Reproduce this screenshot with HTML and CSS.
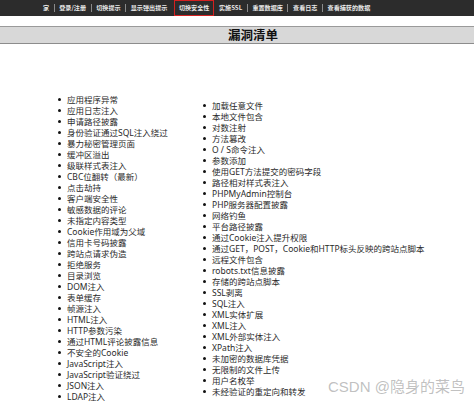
FILE: index.html
```html
<!DOCTYPE html>
<html lang="zh-CN">
<head>
<meta charset="utf-8">
<title>漏洞清单</title>
<link rel="stylesheet" href="styles.css">
</head>
<body>
<nav class="nav">
  <span class="nav-item">家</span><span class="sep"></span>
  <span class="nav-item">登录/注册</span><span class="sep"></span>
  <span class="nav-item">切换提示</span><span class="sep"></span>
  <span class="nav-item">显示弹出提示</span>
  <span class="nav-item active">切换安全性</span>
  <span class="nav-item">实施SSL</span><span class="sep"></span>
  <span class="nav-item">重置数据库</span><span class="sep"></span>
  <span class="nav-item">查看日志</span><span class="sep"></span>
  <span class="nav-item">查看捕获的数据</span>
</nav>
<h1 class="title">漏洞清单</h1>
<div class="lists">
  <ul class="col col-left">
    <li>应用程序异常</li>
    <li>应用日志注入</li>
    <li>申请路径披露</li>
    <li>身份验证通过SQL注入绕过</li>
    <li>暴力秘密管理页面</li>
    <li>缓冲区溢出</li>
    <li>级联样式表注入</li>
    <li>CBC位翻转（最新）</li>
    <li>点击劫持</li>
    <li>客户端安全性</li>
    <li>敏感数据的评论</li>
    <li>未指定内容类型</li>
    <li>Cookie作用域为父域</li>
    <li>信用卡号码披露</li>
    <li>跨站点请求伪造</li>
    <li>拒绝服务</li>
    <li>目录浏览</li>
    <li>DOM注入</li>
    <li>表单缓存</li>
    <li>帧源注入</li>
    <li>HTML注入</li>
    <li>HTTP参数污染</li>
    <li>通过HTML评论披露信息</li>
    <li>不安全的Cookie</li>
    <li>JavaScript注入</li>
    <li>JavaScript验证绕过</li>
    <li>JSON注入</li>
    <li>LDAP注入</li>
  </ul>
  <ul class="col col-right">
    <li>加载任意文件</li>
    <li>本地文件包含</li>
    <li>对数注射</li>
    <li>方法篡改</li>
    <li>O / S命令注入</li>
    <li>参数添加</li>
    <li>使用GET方法提交的密码字段</li>
    <li>路径相对样式表注入</li>
    <li>PHPMyAdmin控制台</li>
    <li>PHP服务器配置披露</li>
    <li>网络钓鱼</li>
    <li>平台路径披露</li>
    <li>通过Cookie注入提升权限</li>
    <li>通过GET，POST，Cookie和HTTP标头反映的跨站点脚本</li>
    <li>远程文件包含</li>
    <li>robots.txt信息披露</li>
    <li>存储的跨站点脚本</li>
    <li>SSL剥离</li>
    <li>SQL注入</li>
    <li>XML实体扩展</li>
    <li>XML注入</li>
    <li>XML外部实体注入</li>
    <li>XPath注入</li>
    <li>未加密的数据库凭据</li>
    <li>无限制的文件上传</li>
    <li>用户名枚举</li>
    <li>未经验证的重定向和转发</li>
  </ul>
</div>
<div class="watermark">CSDN @隐身的菜鸟</div>
</body>
</html>
```
FILE: styles.css
```css
html, body {
  margin: 0;
  padding: 0;
  overflow: hidden;
  background: #fff;
}
body {
  position: relative;
  width: 474px;
  height: 403px;
  font-family: "Noto Sans", "Noto Sans CJK SC", sans-serif;
  color: #2a2a2a;
}
.nav {
  display: flex;
  align-items: center;
  gap: 4.6px;
  height: 16px;
  padding-left: 43px;
  background: #2c2c2c;
  box-sizing: border-box;
}
.nav-item {
  font-family: "Noto Sans CJK SC", sans-serif;
  font-size: 6.1px;
  font-weight: 700;
  color: #e8e8e8;
  line-height: 16px;
  white-space: nowrap;
}
.nav-item.active {
  height: 16px;
  box-sizing: border-box;
  line-height: 13px;
  padding: 0 4px;
  border: 1.5px solid #d42020;
  margin-left: 2px;
}
.sep {
  width: 1px;
  height: 8px;
  background: #8a8a8a;
}
.title {
  margin: 10px 0 0 0;
  height: 16px;
  padding-left: 32px;
  border-top: 1.5px solid #9a9a9a;
  border-bottom: 1px solid #8c8c8c;
  background: #d8d8d8;
  text-align: center;
  font-family: "Noto Sans CJK SC", sans-serif;
  font-size: 12.5px;
  font-weight: 700;
  line-height: 16px;
  color: #111;
}
.lists {
  display: grid;
  grid-template-columns: 145px auto;
  align-items: center;
  margin-top: 50px;
  padding-left: 67px;
}
.col {
  list-style: none;
  margin: 0;
  padding: 0;
}
.col li {
  position: relative;
  font-size: 8.5px;
  line-height: 11px;
  white-space: nowrap;
  color: #2a2a2a;
}
.col li::before {
  content: "";
  position: absolute;
  left: -9px;
  top: 4px;
  width: 3px;
  height: 3px;
  border-radius: 50%;
  background: #111;
}
.watermark {
  position: absolute;
  left: 328px;
  top: 377px;
  font-family: "Liberation Sans", "Noto Sans CJK SC", sans-serif;
  font-size: 15px;
  line-height: 20px;
  color: rgba(140, 140, 140, 0.55);
  white-space: nowrap;
}
```
